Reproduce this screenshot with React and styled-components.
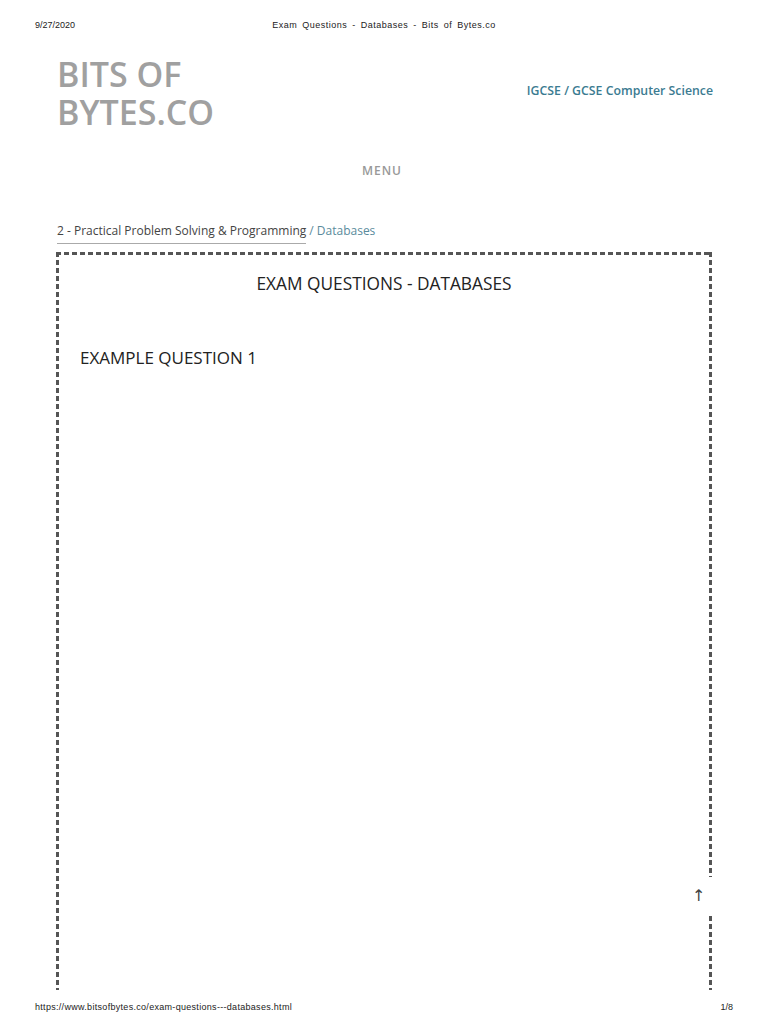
import React from 'react';
import styled, { createGlobalStyle } from 'styled-components';

const GlobalStyle = createGlobalStyle`
  html, body {
    margin: 0;
    padding: 0;
    background: #fff;
  }
  * {
    box-sizing: border-box;
  }
`

const Page = styled.div`
  width: 768px;
  height: 1024px;
  display: flex;
  flex-direction: column;
  font-family: "Open Sans", "DejaVu Sans", sans-serif;
  overflow: hidden;
`

const PrintBar = styled.div`
  display: flex;
  justify-content: space-between;
  align-items: center;
  padding: 0 35px;
  height: ${props => props.height}px;
  padding-top: ${props => props.top}px;
  font-family: "Liberation Sans", Arial, sans-serif;
  font-size: 9px;
  color: #222;
  position: relative;
`

const PrintText = styled.span`
  letter-spacing: ${props => props.spacing || 0}px;
`

const PrintCenter = styled.span`
  position: absolute;
  left: 0;
  right: 0;
  text-align: center;
  letter-spacing: 0.5px;
  word-spacing: 2px;
  pointer-events: none;
`

const Header = styled.header`
  display: flex;
  justify-content: space-between;
  align-items: flex-start;
  padding: 25px 55px 0 57px;
`

const Logo = styled.div`
  font-size: 34px;
  font-weight: 600;
  line-height: 38px;
  color: #a0a0a0;
`

const Tagline = styled.a`
  font-size: 12.3px;
  font-weight: 600;
  color: #3b7b91;
  text-decoration: none;
  margin-top: 27px;
`

const Menu = styled.div`
  text-align: center;
  font-size: 12px;
  font-weight: 600;
  letter-spacing: 1px;
  color: #999;
  margin-top: 31px;
  margin-left: -4px;
`

const Crumbs = styled.div`
  display: flex;
  align-items: flex-start;
  padding-left: 57px;
  margin-top: 43px;
  font-size: 12px;
  height: 30px;
`

const CrumbLink = styled.span`
  color: #444;
  border-bottom: 1px solid #aaa;
  height: 22px;
`

const CrumbCurrent = styled.span`
  color: #5a8b9c;
  margin-left: 3px;
`

const Box = styled.main`
  flex: 1;
  position: relative;
  margin: 0 56px 0 56px;
  padding: 20px 0 0 24px;
  background:
    repeating-linear-gradient(to right, #555 0 5px, transparent 5px 8px) top left / 100% 3px no-repeat,
    repeating-linear-gradient(to bottom, #555 0 5px, transparent 5px 8px) top left / 3px 100% no-repeat,
    repeating-linear-gradient(to bottom, #555 0 5px, transparent 5px 8px) top right / 3px 100% no-repeat;
`

const Title = styled.h1`
  margin: 0 0 0 -24px;
  text-align: center;
  font-size: 17.3px;
  font-weight: 400;
  color: #222;
`

const Question = styled.h2`
  margin: 51px 0 0 0;
  font-size: 17px;
  font-weight: 400;
  color: #222;
`

const TopButton = styled.div`
  position: absolute;
  right: -4px;
  bottom: 77px;
  width: 30px;
  height: 36px;
  background: #fff;
  display: flex;
  align-items: center;
  justify-content: flex-start;
  padding-left: 6px;
  font-family: "DejaVu Sans", sans-serif;
  font-size: 16px;
  color: #444;
`

const App = () => {
  return (
    <Page>
      <GlobalStyle />
      <PrintBar top={20} height={30}>
        <PrintText>9/27/2020</PrintText>
        <PrintCenter>Exam Questions - Databases - Bits of Bytes.co</PrintCenter>
      </PrintBar>
      <Header>
        <Logo>BITS OF<br />BYTES.CO</Logo>
        <Tagline>IGCSE / GCSE Computer Science</Tagline>
      </Header>
      <Menu>MENU</Menu>
      <Crumbs>
        <CrumbLink>2 - Practical Problem Solving &amp; Programming</CrumbLink>
        <CrumbCurrent>/ Databases</CrumbCurrent>
      </Crumbs>
      <Box>
        <Title>EXAM QUESTIONS - DATABASES</Title>
        <Question>EXAMPLE QUESTION 1</Question>
        <TopButton>↑</TopButton>
      </Box>
      <PrintBar top={0} height={34}>
        <PrintText spacing={0.3}>https://www.bitsofbytes.co/exam-questions---databases.html</PrintText>
        <PrintText>1/8</PrintText>
      </PrintBar>
    </Page>
  );
};

export default App;
